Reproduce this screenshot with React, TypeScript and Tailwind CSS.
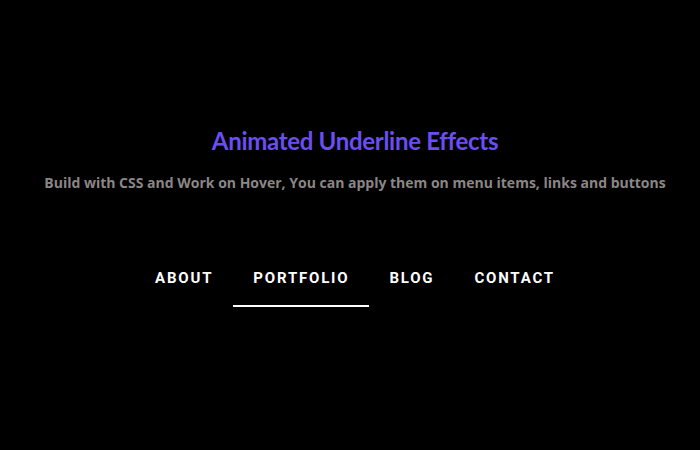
export default function App() {
  const links = ['ABOUT', 'PORTFOLIO', 'BLOG', 'CONTACT'];
  const active = 'PORTFOLIO';

  return (
    <div className="w-[700px] h-[450px] bg-black flex flex-col items-center pl-[10px]">
      <h1 className="mt-[124px] text-[24px] leading-[34px] font-bold text-[#6a4ef2] tracking-[-0.3px]" style={{ fontFamily: 'Lato, sans-serif' }}>
        Animated Underline Effects
      </h1>
      <p className="mt-[15px] text-[14px] leading-[20px] font-bold text-[#8b8686]" style={{ fontFamily: '"Open Sans", sans-serif' }}>
        Build with CSS and Work on Hover, You can apply them on menu items, links and buttons
      </p>
      <nav className="mt-[75px] flex">
        {links.map((l) => (
          <a key={l} href="#" className="relative px-5 pb-[19px] text-[15px] leading-[20px] font-bold tracking-[1.8px] text-white" style={{ fontFamily: 'Roboto, sans-serif' }}>
            {l}
            {l === active && <span className="absolute left-0 right-0 bottom-0 h-[2px] bg-white" />}
          </a>
        ))}
      </nav>
    </div>
  );
}
